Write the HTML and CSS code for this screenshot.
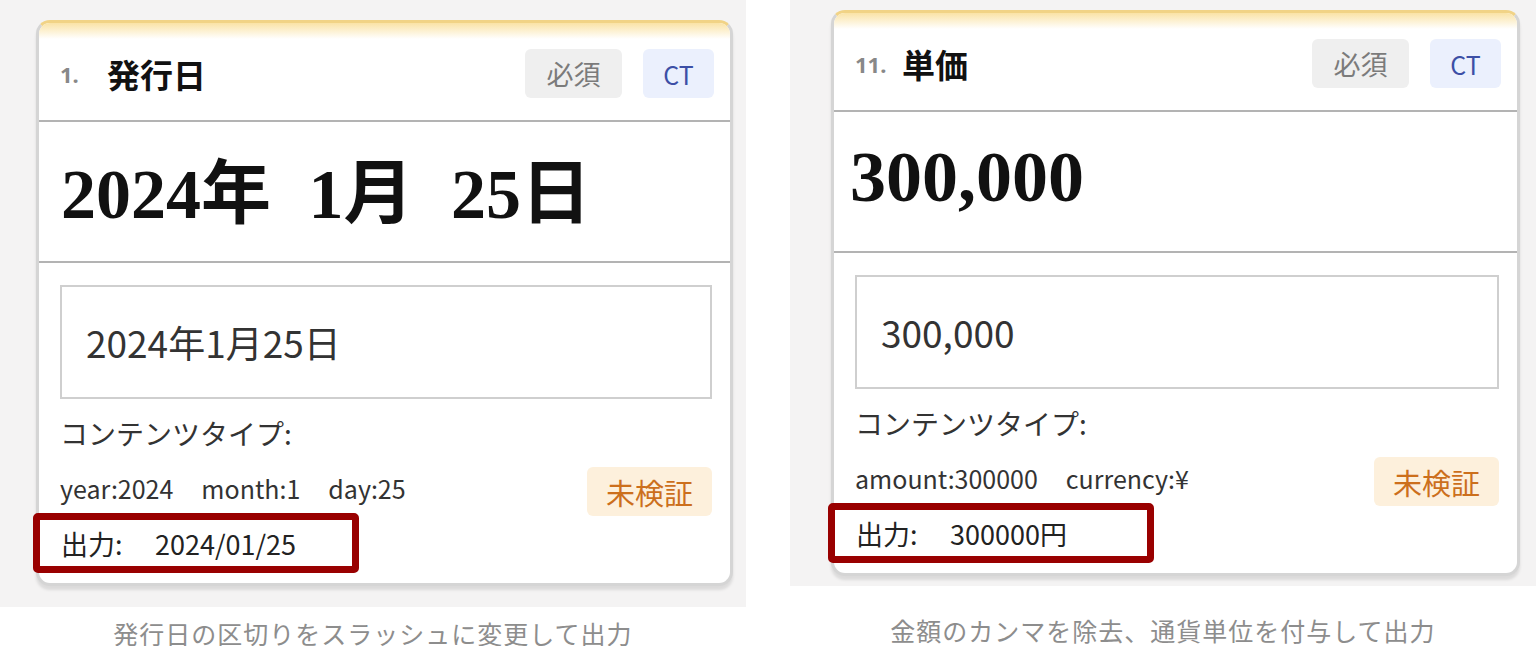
FILE: index.html
```html
<!DOCTYPE html>
<html lang="ja">
  <head>
    <meta charset="UTF-8" />
    <meta name="viewport" content="width=device-width, initial-scale=1.0" />
    <title>出力フォーマット</title>
    <link rel="stylesheet" href="styles.css">
  </head>
  <body>
    <div class="page">
      <div class="column">
        <div class="panel panel-left">
          <div class="card">
            <header class="card-head">
              <span class="num">1.</span>
              <h2>発行日</h2>
              <span class="badge badge-required">必須</span>
              <span class="badge badge-ct">CT</span>
            </header>
            <div class="preview preview-date">2024年 1月 25日</div>
            <div class="card-body">
              <div class="field">2024年1月25日</div>
              <p class="ct-label">コンテンツタイプ:</p>
              <div class="ct-row">
                <span class="ct-values">
                  <span>year:2024</span><span>month:1</span><span>day:25</span>
                </span>
                <span class="badge badge-unverified">未検証</span>
              </div>
              <div class="output">
                <span class="output-label">出力:</span>
                <span>2024/01/25</span>
              </div>
            </div>
          </div>
        </div>
        <p class="caption">発行日の区切りをスラッシュに変更して出力</p>
      </div>

      <div class="column">
        <div class="panel panel-right">
          <div class="card">
            <header class="card-head">
              <span class="num">11.</span>
              <h2>単価</h2>
              <span class="badge badge-required">必須</span>
              <span class="badge badge-ct">CT</span>
            </header>
            <div class="preview preview-amount">300,000</div>
            <div class="card-body">
              <div class="field">300,000</div>
              <p class="ct-label">コンテンツタイプ:</p>
              <div class="ct-row">
                <span class="ct-values">
                  <span>amount:300000</span><span>currency:¥</span>
                </span>
                <span class="badge badge-unverified">未検証</span>
              </div>
              <div class="output">
                <span class="output-label">出力:</span>
                <span>300000円</span>
              </div>
            </div>
          </div>
        </div>
        <p class="caption caption-right">金額のカンマを除去、通貨単位を付与して出力</p>
      </div>
    </div>
  </body>
</html>
```

FILE: styles.css
```css
* {
  box-sizing: border-box;
}

body {
  margin: 0;
  background-color: #fff;
  font-family: "Noto Sans CJK JP", "Noto Sans", sans-serif;
  color: #333;
}

.page {
  display: flex;
  gap: 44px;
}

.column {
  width: 746px;
}

.panel {
  background-color: #f4f3f3;
}

.panel-left {
  height: 607px;
  padding: 20px 13px 0 36px;
}

.panel-right {
  height: 586px;
  padding: 10px 16px 0 41px;
}

.card {
  background-color: #fff;
  border: 3px solid #d5d5d5;
  border-top-color: #f1d386;
  border-radius: 14px;
  box-shadow: 0 4px 3px rgba(0, 0, 0, 0.1);
}

.card-head {
  height: 99px;
  padding: 4px 16px 0 21px;
  display: flex;
  align-items: center;
  border-bottom: 2px solid #b3b3b3;
  border-radius: 11px 11px 0 0;
  background: linear-gradient(#fae3a6, #fff 16px);
}

.num {
  width: 47px;
  font-family: "Noto Sans", sans-serif;
  font-size: 22px;
  font-weight: 700;
  color: #888;
}

.card-head h2 {
  flex: 1;
  margin: 0;
  font-size: 33px;
  font-weight: 700;
  color: #111;
}

.badge {
  display: inline-flex;
  align-items: center;
  justify-content: center;
  height: 49px;
  border-radius: 6px;
}

.badge-required {
  width: 97px;
  background-color: #efefef;
  color: #7b7b7b;
  font-size: 27px;
}

.badge-ct {
  width: 71px;
  margin-left: 21px;
  background-color: #ebf0fd;
  color: #3c4fa6;
  font-size: 25px;
}

.badge-unverified {
  width: 125px;
  background-color: #fdf0dc;
  color: #cc6f1c;
  font-size: 29px;
}

.preview {
  height: 141px;
  padding: 0 0 8px 22px;
  display: flex;
  align-items: center;
  border-bottom: 2px solid #b3b3b3;
  font-family: "Liberation Serif", "Noto Sans CJK JP", serif;
  font-size: 70px;
  font-weight: bold;
  color: #111;
}

.preview-date {
  word-spacing: 20px;
}

.preview-amount {
  padding-left: 16px;
  font-size: 72px;
}

.card-body {
  padding: 22px 18px 10px 21px;
}

.field {
  height: 114px;
  padding-left: 24px;
  display: flex;
  align-items: center;
  border: 2px solid #cfcfcf;
  font-size: 37px;
  color: #333;
}

.ct-label {
  margin: 14px 0 0;
  font-size: 28px;
  line-height: 40px;
}

.ct-row {
  margin-top: 14px;
  display: flex;
  justify-content: space-between;
  align-items: center;
}

.ct-values {
  font-size: 25px;
  line-height: 36px;
  margin-top: -8px;
}

.ct-values span {
  margin-right: 28px;
}

.output {
  margin: -3px 0 0 -27px;
  width: 326px;
  height: 60px;
  padding-left: 21px;
  display: flex;
  align-items: center;
  border: 7px solid #990000;
  border-radius: 5px;
  font-size: 27px;
  color: #222;
}

.output-label {
  width: 94px;
}

.caption {
  margin: 0;
  padding-top: 13px;
  text-align: center;
  font-size: 25px;
  line-height: 26px;
  letter-spacing: 1px;
  color: #8d8d8d;
}

.caption-right {
  padding-top: 31px;
}
```
